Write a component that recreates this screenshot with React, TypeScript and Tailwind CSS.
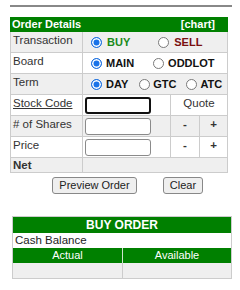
import React from "react";

function Radio({ checked }: { checked?: boolean }) {
  return checked ? (
    <span className="block w-[11px] h-[11px] rounded-full border border-[#1a6fe0] bg-[#1a73e8] shadow-[inset_0_0_0_1.5px_#ffffff] shrink-0" />
  ) : (
    <span className="block w-[11px] h-[11px] rounded-full border border-[#7a7a7a] bg-white shrink-0" />
  );
}

export default function App() {
  return (
    <div className="w-[240px] h-[290px] bg-white font-['Liberation_Sans',Arial,sans-serif] text-[#333] overflow-hidden">
      <div className="pt-[5px]">
        <div className="ml-[10px] w-[222px] h-[2px] bg-[#888]" />
      </div>

      {/* Order details table */}
      <div className="mt-[10px] ml-[10px] w-[218px]">
        <div className="h-[15px] bg-[#008000] flex items-center justify-between pl-[2px] pr-[13px] text-white font-bold text-[11px] leading-[13px]">
          <span>Order Details</span>
          <span>[chart]</span>
        </div>
        <div className="border-l border-r border-[#ccc] text-[11.5px] leading-[13px]">
          {/* Transaction */}
          <div className="flex h-[21px] border-b border-[#ccc] bg-[#efefef]">
            <div className="w-[72px] border-r border-[#ccc] pl-[2px] pt-[2px]">Transaction</div>
            <div className="flex-1 flex items-center text-[11px] font-bold pt-[1px]">
              <span className="ml-[8px]"><Radio checked /></span>
              <span className="ml-[5px] text-[#1a8a1a]">BUY</span>
              <span className="ml-[28px]"><Radio /></span>
              <span className="ml-[5px] text-[#7a1010]">SELL</span>
            </div>
          </div>
          {/* Board */}
          <div className="flex h-[21px] border-b border-[#ccc] bg-white">
            <div className="w-[72px] border-r border-[#ccc] pl-[2px] pt-[2px]">Board</div>
            <div className="flex-1 flex items-center text-[11px] font-bold text-[#111] pt-[1px]">
              <span className="ml-[8px]"><Radio checked /></span>
              <span className="ml-[4px]">MAIN</span>
              <span className="ml-[19px]"><Radio /></span>
              <span className="ml-[4px]">ODDLOT</span>
            </div>
          </div>
          {/* Term */}
          <div className="flex h-[21px] border-b border-[#ccc] bg-[#efefef]">
            <div className="w-[72px] border-r border-[#ccc] pl-[2px] pt-[2px]">Term</div>
            <div className="flex-1 flex items-center text-[11px] font-bold text-[#111] pt-[1px]">
              <span className="ml-[8px]"><Radio checked /></span>
              <span className="ml-[4px]">DAY</span>
              <span className="ml-[11px]"><Radio /></span>
              <span className="ml-[3px]">GTC</span>
              <span className="ml-[10px]"><Radio /></span>
              <span className="ml-[3px]">ATC</span>
            </div>
          </div>
          {/* Stock Code */}
          <div className="flex h-[21px] border-b border-[#ccc] bg-white">
            <div className="w-[72px] border-r border-[#ccc] pl-[2px] pt-[2px]">
              <span className="underline">Stock Code</span>
            </div>
            <div className="w-[88px] border-r border-[#ccc] flex items-center pl-[2px]">
              <div className="w-[66px] h-[17px] border-2 border-[#111] rounded-[3px] bg-white" />
            </div>
            <div className="flex-1 text-center pt-[2px]">Quote</div>
          </div>
          {/* Shares */}
          <div className="flex h-[21px] border-b border-[#ccc] bg-[#efefef]">
            <div className="w-[72px] border-r border-[#ccc] pl-[2px] pt-[2px]"># of Shares</div>
            <div className="w-[88px] border-r border-[#ccc] flex items-center pl-[2px]">
              <div className="w-[66px] h-[17px] border border-[#8a8a8a] rounded-[3px] bg-white" />
            </div>
            <div className="w-[29px] border-r border-[#ccc] text-center pt-[2px] font-bold">-</div>
            <div className="flex-1 text-center pt-[2px] font-bold">+</div>
          </div>
          {/* Price */}
          <div className="flex h-[21px] border-b border-[#ccc] bg-white">
            <div className="w-[72px] border-r border-[#ccc] pl-[2px] pt-[2px]">Price</div>
            <div className="w-[88px] border-r border-[#ccc] flex items-center pl-[2px]">
              <div className="w-[66px] h-[17px] border border-[#8a8a8a] rounded-[3px] bg-white" />
            </div>
            <div className="w-[29px] border-r border-[#ccc] text-center pt-[2px] font-bold">-</div>
            <div className="flex-1 text-center pt-[2px] font-bold">+</div>
          </div>
          {/* Net */}
          <div className="flex h-[15px] border-b border-[#ccc] bg-[#efefef]">
            <div className="w-[72px] border-r border-[#ccc] pl-[2px] pt-[1px] font-bold">Net</div>
            <div className="flex-1" />
          </div>
        </div>
      </div>

      {/* Buttons */}
      <div className="flex mt-[4px]">
        <div className="ml-[52px] w-[85px] h-[17px] border border-[#888] rounded-[3px] bg-[#efefef] text-[11px] leading-[15px] text-[#222] text-center">
          Preview Order
        </div>
        <div className="ml-[26px] w-[40px] h-[17px] border border-[#888] rounded-[3px] bg-[#efefef] text-[11px] leading-[15px] text-[#222] text-center">
          Clear
        </div>
      </div>

      {/* Buy order table */}
      <div className="mt-[22px] ml-[12px] w-[220px] border border-[#ccc]">
        <div className="h-[16px] bg-[#008000] text-white font-bold text-[12px] leading-[16px] text-center">
          BUY ORDER
        </div>
        <div className="h-[15px] bg-white text-[11.5px] leading-[15px] pl-[2px] text-[#222]">
          Cash Balance
        </div>
        <div className="flex h-[15px] bg-[#008000] text-white text-[11px] leading-[15px]">
          <div className="w-[110px] border-r border-[#cfe3cf] text-center">Actual</div>
          <div className="flex-1 text-center">Available</div>
        </div>
        <div className="flex h-[15px] bg-[#efefef]">
          <div className="w-[110px] border-r border-[#ccc]" />
          <div className="flex-1" />
        </div>
      </div>
    </div>
  );
}
